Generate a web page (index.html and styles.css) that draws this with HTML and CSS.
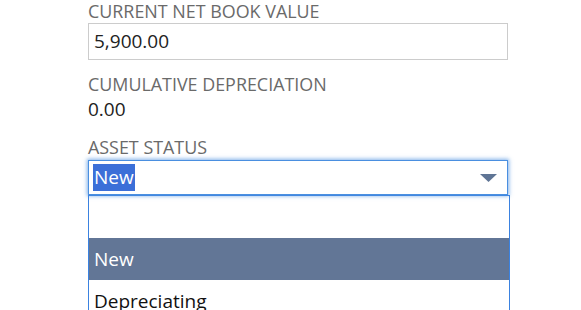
FILE: index.html
```html
<!DOCTYPE html>
<html>
<head>
<meta charset="utf-8">
<link rel="stylesheet" href="styles.css">
</head>
<body>
<div class="form">
  <div class="field">
    <div class="label">CURRENT NET BOOK VALUE</div>
    <div class="input">5,900.00</div>
  </div>
  <div class="field gap13">
    <div class="label">CUMULATIVE DEPRECIATION</div>
    <div class="value">0.00</div>
  </div>
  <div class="field gap15">
    <div class="label">ASSET STATUS</div>
    <div class="select">
      <span class="selected">New</span>
      <svg class="arrow" width="17" height="8" viewBox="0 0 17 8"><path d="M0 0 H17 L8.5 8 Z" fill="#5f7595"/></svg>
    </div>
    <div class="list">
      <div class="option"></div>
      <div class="option active">New</div>
      <div class="option">Depreciating</div>
    </div>
  </div>
</div>
</body>
</html>
```
FILE: styles.css
```css
html, body {
  margin: 0;
  padding: 0;
  background: #fff;
  overflow: hidden;
}
body {
  font-family: "Open Sans", "Liberation Sans", sans-serif;
  color: #222;
}
.form {
  padding-left: 88px;
  width: 420px;
}
.field {
  display: flex;
  flex-direction: column;
}
.gap13 { margin-top: 13px; }
.gap15 { margin-top: 15px; }
.label {
  font-size: 17.9px;
  line-height: 22px;
  color: #6a6a6a;
}
.input {
  margin-top: 1px;
  height: 35px;
  border: 1px solid #cccccc;
  box-sizing: content-box;
  padding: 0 0 0 5px;
  font-size: 19px;
  line-height: 35px;
}
.value {
  margin-top: 2px;
  font-size: 19px;
  line-height: 24px;
}
.select {
  margin-top: 2px;
  height: 33px;
  border: 1px solid #4a8fe0;
  box-shadow: 0 0 4px 1px rgba(74, 143, 224, 0.7);
  display: flex;
  align-items: center;
  justify-content: space-between;
  padding: 0 10px 0 4px;
  font-size: 19px;
  position: relative;
  z-index: 1;
  background: #fff;
}
.selected {
  background: #3b6fd8;
  color: #fff;
  line-height: 27px;
  padding: 0 1px;
}
.arrow {
  display: block;
  margin-top: 1px;
}
.list {
  width: 420px;
  border: 1px solid #3b82e0;
  border-bottom: none;
  background: #fff;
}
.option {
  height: 42px;
  line-height: 42px;
  padding-left: 5px;
  font-size: 19px;
  color: #111;
}
.option.active {
  background: #627696;
  color: #fff;
}
```
